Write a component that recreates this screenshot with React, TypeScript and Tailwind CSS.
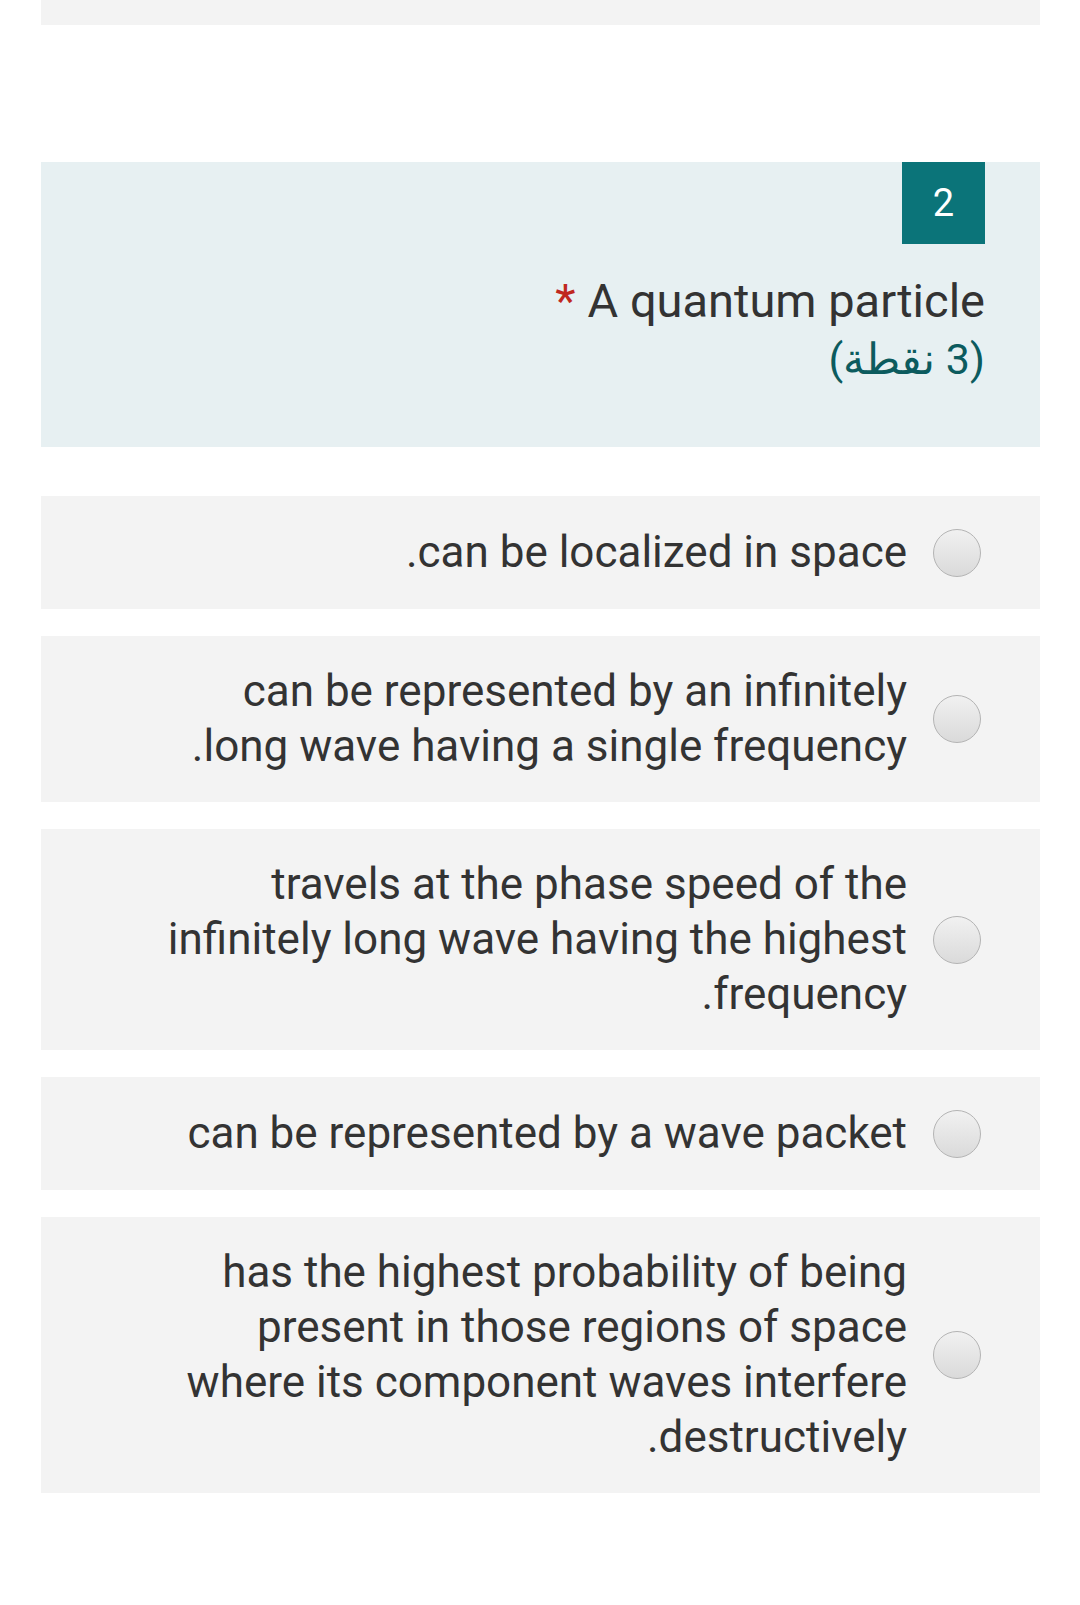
type OptionProps = {
  text: string;
};

function Option({ text }: OptionProps) {
  return (
    <div
      dir="rtl"
      className="w-[999px] min-h-[113px] bg-[#f3f3f3] flex items-center gap-[26px] pr-[59px] py-[28px]"
    >
      <span className="w-[48px] h-[48px] shrink-0 rounded-full border border-[#b4b4b4] bg-gradient-to-b from-[#f1f1f1] to-[#dadada]" />
      <p className="w-[750px] text-[44px] leading-[55px] text-[#333333]">
        {text}
      </p>
    </div>
  );
}

export default function App() {
  return (
    <div className="w-[1080px] min-h-[1605px] bg-white font-['Roboto',sans-serif] pl-[41px] pb-[113px]">
      <div className="w-[999px] h-[25px] bg-[#f3f3f3]" />

      <div className="mt-[137px] w-[999px] bg-[#e7f0f2] pr-[55px] pb-[58px] flex flex-col items-end">
        <div className="w-[83px] h-[82px] bg-[#0b7479] flex items-center justify-center text-white text-[38px]">
          2
        </div>
        <p className="mt-[27px] text-[47px] leading-[59px] text-[#333333]">
          <span className="text-[#c0281f] mr-[12px]">*</span>A quantum particle
        </p>
        <p dir="rtl" className="text-[43px] leading-[59px] text-[#0c5b5e]">
          (3 نقطة)
        </p>
      </div>

      <div className="mt-[49px] flex flex-col gap-[27px]">
        <Option text="can be localized in space." />
        <Option text="can be represented by an infinitely long wave having a single frequency." />
        <Option text="travels at the phase speed of the infinitely long wave having the highest frequency." />
        <Option text="can be represented by a wave packet" />
        <Option text="has the highest probability of being present in those regions of space where its component waves interfere destructively." />
      </div>
    </div>
  );
}
